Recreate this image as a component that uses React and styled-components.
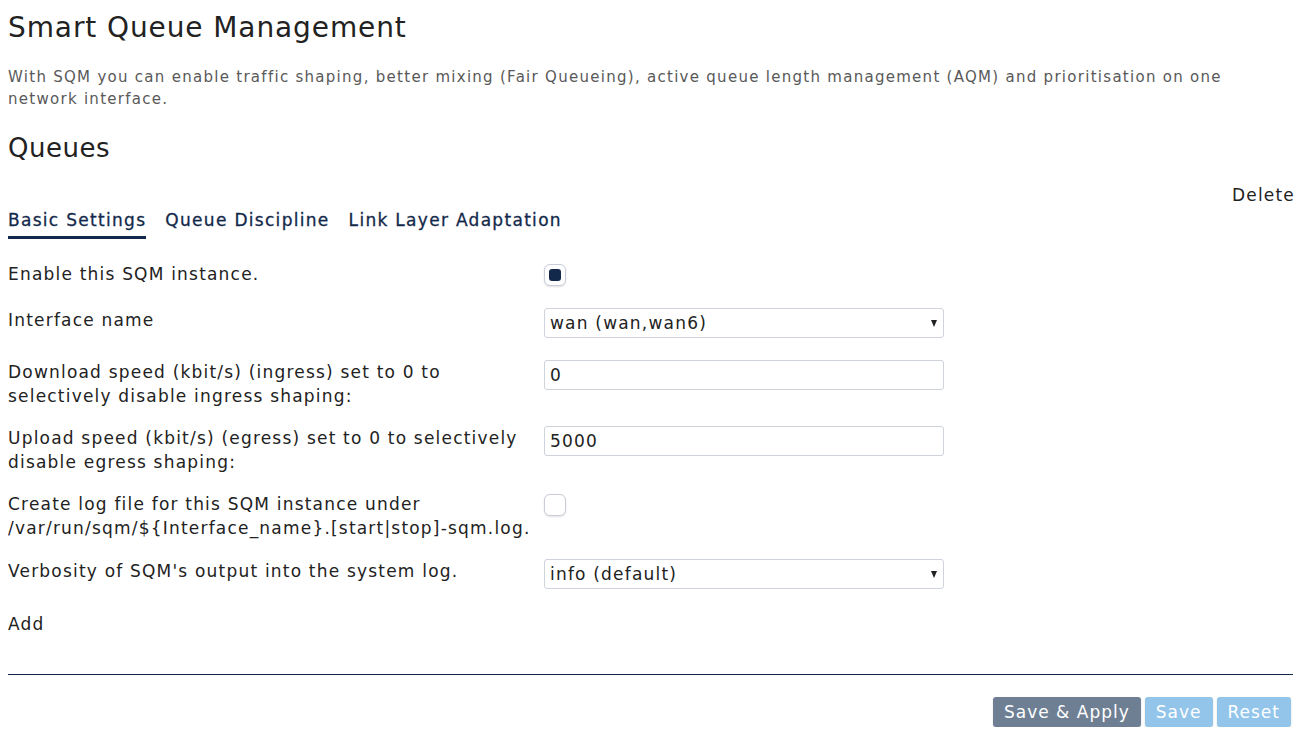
import React, { useState } from "react";
import styled, { createGlobalStyle } from "styled-components";

const navy = "#13294b";

const Global = createGlobalStyle`
  body {
    margin: 8px;
    background: #fff;
    font-family: "DejaVu Sans", "Liberation Sans", sans-serif;
    color: #222;
  }
  * { box-sizing: border-box; }
`;

const Page = styled.div`
  width: 1289px;
`;

const Title = styled.h2`
  margin: 2px 0 0;
  font-size: 28px;
  line-height: 36px;
  font-weight: normal;
  letter-spacing: 0.9px;
  color: #222;
`;

const Description = styled.p`
  margin: 20px 0 0;
  max-width: 1262px;
  font-size: 15px;
  line-height: 22px;
  letter-spacing: 1.28px;
  color: #595959;
`;

const SectionTitle = styled.h3`
  margin: 21px 0 0;
  font-size: 26px;
  line-height: 34px;
  font-weight: normal;
  letter-spacing: 0.5px;
  color: #222;
`;

const ActionRow = styled.div`
  display: flex;
  justify-content: flex-end;
  margin-top: 18px;
  padding-right: 2px;
`;

const TextLink = styled.span`
  font-size: 17px;
  line-height: 24px;
  letter-spacing: 1.2px;
  color: #222;
  cursor: pointer;
`;

const Tabs = styled.ul`
  display: flex;
  gap: 19px;
  margin: 1px 0 0;
  padding: 0;
  list-style: none;
`;

const Tab = styled.li`
  padding-bottom: 4px;
  font-size: 17px;
  line-height: 24px;
  letter-spacing: 1.3px;
  color: ${navy};
  -webkit-text-stroke: 0.3px ${navy};
  border-bottom: 3px solid ${(p) => (p.$active ? navy : "transparent")};
  cursor: pointer;
`;

const Form = styled.div`
  display: flex;
  flex-direction: column;
  margin-top: 23px;
`;

const Row = styled.div`
  display: grid;
  grid-template-columns: 536px 400px;
  align-items: start;
  margin-top: ${(p) => p.$mt || 0}px;
  min-height: ${(p) => p.$min || 0}px;
`;

const Label = styled.label`
  font-size: 17px;
  line-height: 24px;
  letter-spacing: 1.2px;
  color: #222;
`;

const Check = styled.input.attrs({ type: "checkbox" })`
  appearance: none;
  position: relative;
  width: 22px;
  height: 22px;
  margin: 2px 0 0;
  border: 1px solid #c9cdd6;
  border-radius: 6px;
  background: #fff;
  box-shadow: 0 1px 2px rgba(0, 0, 0, 0.12);
  cursor: pointer;
  &:checked::after {
    content: "";
    position: absolute;
    left: 4px;
    top: 4px;
    width: 12px;
    height: 12px;
    border-radius: 3px;
    background: ${navy};
  }
`;

const Field = styled.input`
  width: 400px;
  height: 30px;
  padding: 0 5px;
  border: 1px solid #cfd3db;
  border-radius: 3px;
  font-family: inherit;
  font-size: 17px;
  letter-spacing: 1.2px;
  color: #222;
  outline: none;
`;

const SelectWrap = styled.div`
  position: relative;
  width: 400px;
  &::after {
    content: "";
    position: absolute;
    right: 7px;
    top: 12px;
    border-left: 3.5px solid transparent;
    border-right: 3.5px solid transparent;
    border-top: 7px solid #222;
    pointer-events: none;
  }
`;

const Select = styled.select`
  appearance: none;
  width: 100%;
  height: 30px;
  padding: 0 20px 0 5px;
  border: 1px solid #cfd3db;
  border-radius: 3px;
  background: #fff;
  font-family: inherit;
  font-size: 17px;
  letter-spacing: 1.2px;
  color: #222;
  outline: none;
`;

const AddRow = styled.div`
  margin-top: 23px;
`;

const Divider = styled.div`
  height: 1px;
  margin: 38px 4px 0 -3px;
  background: ${navy};
`;

const Footer = styled.div`
  display: flex;
  justify-content: flex-end;
  gap: 4px;
  margin-top: 22px;
  padding-right: 6px;
`;

const Button = styled.button`
  height: 30px;
  padding: 0 11px;
  border: 0;
  border-radius: 3px;
  font-family: inherit;
  font-size: 17px;
  letter-spacing: 1px;
  color: #fff;
  background: ${(p) => (p.$primary ? "#6e7f94" : "#93c5eb")};
  box-shadow: 0 1px 2px rgba(0, 0, 0, 0.15);
  cursor: pointer;
`;

const tabs = ["Basic Settings", "Queue Discipline", "Link Layer Adaptation"];
const logLabel = "Create log file for this SQM instance under /var/run/sqm/${Interface_name}.[start|stop]-sqm.log.";

export default function App() {
  const [tab, setTab] = useState(0);
  const [enabled, setEnabled] = useState(true);
  const [log, setLog] = useState(false);

  return (
    <Page>
      <Global />
      <Title>Smart Queue Management</Title>
      <Description>
        With SQM you can enable traffic shaping, better mixing (Fair Queueing), active queue length management (AQM) and
        prioritisation on one network interface.
      </Description>
      <SectionTitle>Queues</SectionTitle>
      <ActionRow>
        <TextLink>Delete</TextLink>
      </ActionRow>
      <Tabs>
        {tabs.map((t, i) => (
          <Tab key={t} $active={i === tab} onClick={() => setTab(i)}>
            {t}
          </Tab>
        ))}
      </Tabs>
      <Form>
        <Row $min={26}>
          <Label>Enable this SQM instance.</Label>
          <Check checked={enabled} onChange={(e) => setEnabled(e.target.checked)} />
        </Row>
        <Row $mt={20}>
          <Label>Interface name</Label>
          <SelectWrap>
            <Select defaultValue="wan">
              <option value="wan">wan (wan,wan6)</option>
              <option value="lan">lan</option>
            </Select>
          </SelectWrap>
        </Row>
        <Row $mt={22}>
          <Label>Download speed (kbit/s) (ingress) set to 0 to selectively disable ingress shaping:</Label>
          <Field defaultValue="0" />
        </Row>
        <Row $mt={18}>
          <Label>Upload speed (kbit/s) (egress) set to 0 to selectively disable egress shaping:</Label>
          <Field defaultValue="5000" />
        </Row>
        <Row $mt={18}>
          <Label>{logLabel}</Label>
          <Check checked={log} onChange={(e) => setLog(e.target.checked)} />
        </Row>
        <Row $mt={19}>
          <Label>Verbosity of SQM's output into the system log.</Label>
          <SelectWrap>
            <Select defaultValue="info">
              <option value="info">info (default)</option>
              <option value="debug">debug</option>
            </Select>
          </SelectWrap>
        </Row>
      </Form>
      <AddRow>
        <TextLink>Add</TextLink>
      </AddRow>
      <Divider />
      <Footer>
        <Button $primary>Save &amp; Apply</Button>
        <Button>Save</Button>
        <Button>Reset</Button>
      </Footer>
    </Page>
  );
}
